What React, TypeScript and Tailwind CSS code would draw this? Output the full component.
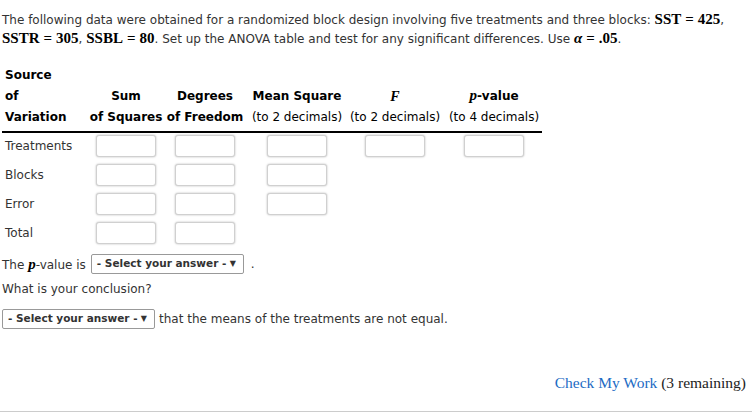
const sans = { fontFamily: '"DejaVu Sans", Verdana, sans-serif' }
const serif = { fontFamily: '"Liberation Serif", "Times New Roman", serif' }

function M({ children }: { children: React.ReactNode }) {
  return (
    <span className="font-bold text-[15px] text-black" style={serif}>
      {children}
    </span>
  )
}

function Eq() {
  return <span className="mx-[4px]">=</span>
}

function Box() {
  return (
    <div className="w-[60px] h-[22px] rounded-[3px] border border-[#d0d0d0] bg-white shadow-[0_0_2px_rgba(0,0,0,0.3)]" />
  )
}

function Select({ w }: { w: string }) {
  return (
    <div
      className={`${w} h-[20px] inline-flex items-center justify-between whitespace-nowrap pl-[5px] pr-[7px] rounded-[2px] border border-[#999] bg-white text-[10.5px] font-bold text-[#333] align-middle`}
    >
      <span>- Select your answer -</span>
      <span className="text-[8px]">▼</span>
    </div>
  )
}

const COLS = 'grid grid-cols-[86px_76px_82px_102px_94px_104px]'

const rows = [
  { label: 'Treatments', n: 5 },
  { label: 'Blocks', n: 3 },
  { label: 'Error', n: 3 },
  { label: 'Total', n: 2 },
]

export default function App() {
  return (
    <div className="w-[752px] h-[420px] bg-white text-[12px] text-[#333] relative overflow-hidden" style={sans}>
      <div className="px-[2px] pt-[10px] leading-[18px]">
        <p>
          The following data were obtained for a randomized block design involving five treatments and three blocks:{' '}
          <M>
            SST<Eq />425
          </M>
          ,
        </p>
        <p>
          <M>
            SSTR<Eq />305
          </M>
          ,{' '}
          <M>
            SSBL<Eq />80
          </M>
          . Set up the ANOVA table and test for any significant differences. Use{' '}
          <M>
            <i>α</i>
            <Eq />.05
          </M>
          .
        </p>
      </div>

      {/* ANOVA table */}
      <div className="mt-[17px] ml-[2px] w-[540px]">
        <div className={`${COLS} leading-[21px] font-bold text-black pb-[3px] border-b-2 border-black`}>
          <div className="pl-[3px]">
            <div>Source</div>
            <div>of</div>
            <div>Variation</div>
          </div>
          <div className="flex flex-col justify-end items-center">
            <div>Sum</div>
            <div>of Squares</div>
          </div>
          <div className="flex flex-col justify-end items-center">
            <div>Degrees</div>
            <div>of Freedom</div>
          </div>
          <div className="flex flex-col justify-end items-center">
            <div>Mean Square</div>
            <div className="font-normal">(to 2 decimals)</div>
          </div>
          <div className="flex flex-col justify-end items-center">
            <div className="italic text-[14px]" style={serif}>
              F
            </div>
            <div className="font-normal">(to 2 decimals)</div>
          </div>
          <div className="flex flex-col justify-end items-center">
            <div>
              <i className="text-[15px]" style={serif}>
                p
              </i>
              -value
            </div>
            <div className="font-normal">(to 4 decimals)</div>
          </div>
        </div>

        <div className="pt-[2px]">
          {rows.map((r) => (
            <div key={r.label} className={`${COLS} h-[29px] items-start`}>
              <div className="pl-[3px] leading-[22px]">{r.label}</div>
              {[0, 1, 2, 3, 4].map((i) => (
                <div key={i} className="flex justify-center">
                  {i < r.n ? <Box /> : null}
                </div>
              ))}
            </div>
          ))}
        </div>
      </div>

      <div className="px-[2px] mt-[2px] flex items-center gap-[5px] h-[22px]">
        <span>
          The{' '}
          <i className="font-bold text-[15px] text-black" style={serif}>
            p
          </i>
          -value is
        </span>
        <Select w="w-[153px]" />
        <span className="ml-[2px]">.</span>
      </div>

      <div className="px-[2px] mt-[3px] leading-[22px]">What is your conclusion?</div>

      <div className="px-[2px] mt-[9px] flex items-center gap-[4px] h-[20px]">
        <Select w="w-[153px]" />
        <span>that the means of the treatments are not equal.</span>
      </div>

      <div className="absolute right-[6px] top-[371px] text-[15.5px] text-[#222]" style={serif}>
        <span className="text-[#1c6bc4]">Check My Work</span> (3 remaining)
      </div>

      <div className="absolute left-0 right-0 top-[411px] border-t border-[#ccc]" />
    </div>
  )
}
